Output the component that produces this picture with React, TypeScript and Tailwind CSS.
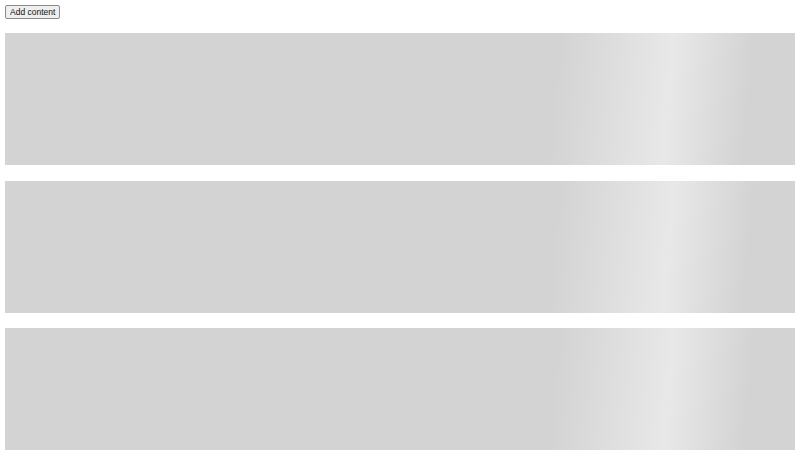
const boxes = [0, 1, 2];

function SkeletonBlock() {
  return (
    <div className="h-[132px] w-full bg-[#d3d3d3] bg-[linear-gradient(95deg,#d3d3d3_0%,#d3d3d3_69%,#e8e8e8_83.5%,#d3d3d3_93.5%,#d3d3d3_100%)]" />
  );
}

export default function App() {
  return (
    <div className="min-h-[450px] bg-white p-[5px] font-['Liberation_Sans',Arial,sans-serif]">
      <button
        type="button"
        className="block h-[14px] rounded-[2px] border border-[#8a8a8a] bg-[#efefef] px-[4px] pt-[1px] text-[8.5px] leading-[11px] text-[#111]"
      >
        Add content
      </button>
      <div className="mt-[14px] flex flex-col gap-[15.5px]">
        {boxes.map((b) => (
          <SkeletonBlock key={b} />
        ))}
      </div>
    </div>
  );
}
